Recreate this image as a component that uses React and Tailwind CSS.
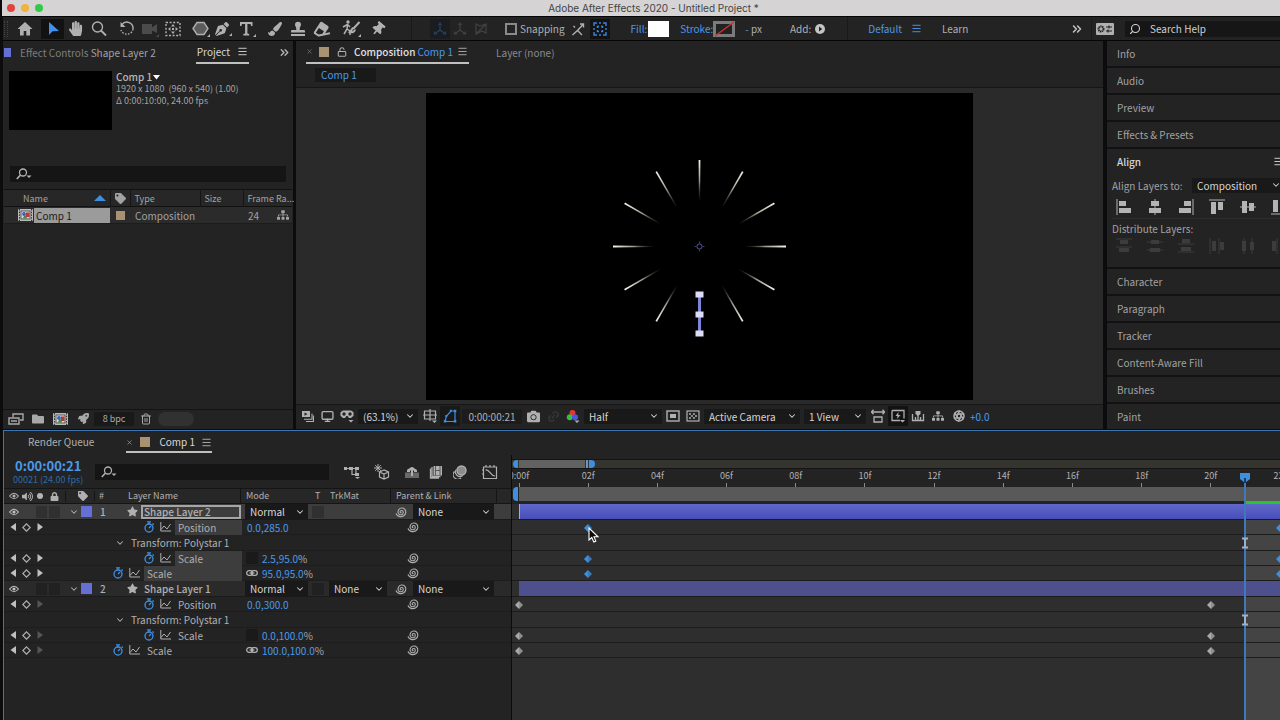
import React from "react";
import {
  FaHandPaper, FaPaintBrush, FaEraser, FaThumbtack, FaPenNib, FaCamera, FaFolder,
  FaTag, FaLock, FaStar, FaSitemap, FaVolumeUp, FaRocket,
} from "react-icons/fa";
import { ChevronDown, Search, ChevronsRight, Menu, X, Trash2, LockOpen, Monitor, Aperture, Link2 } from "lucide-react";

function Svg({ s = 16, w, h, children, className = "" }) {
  const vw = w || s;
  const vh = h || s;
  return (
    <svg width={vw} height={vh} viewBox={`0 0 ${vw} ${vh}`} fill="none" stroke="currentColor" strokeWidth="1.4" className={`shrink-0 ${className}`} aria-hidden="true">
      {children}
    </svg>
  );
}

const HomeIcon = () => (
  <Svg s={16}><path d="M8 1 0.5 8H3v6.500h3.700V10h2.600v4.500H13V8h2.500z" fill="currentColor" stroke="none" /></Svg>
);
const ArrowIcon = () => (
  <Svg s={16}><path d="M4 1v13l3.600-3.700L14 10z" fill="currentColor" stroke="none" /></Svg>
);
const ZoomIcon = () => (
  <Svg s={16}><circle cx="6.500" cy="6" r="5" /><path d="m10 9.500 5 5" strokeWidth="1.800" /></Svg>
);
const RotateIcon = () => (
  <Svg s={16}>
    <path d="M3 3.500A6.200 6.200 0 0 1 14 8" /><path d="M14 8a6.200 6.200 0 0 1-12 1" strokeDasharray="1.500 1.500" />
    <path d="M1.500 1v5h5z" fill="currentColor" stroke="none" />
  </Svg>
);
const VideoIcon = () => (
  <Svg s={18}><path d="M1 4h10v10H1zM10 8l6-4v9l-6-3zM15 17h3v-3z" fill="currentColor" stroke="none" /></Svg>
);
const AnchorIcon = () => (
  <Svg s={16}>
    <rect x="1" y="1.500" width="14" height="13" strokeDasharray="2 1.600" />
    <path d="M8 3 6 5.500h4zM8 13l-2-2.500h4zM3 8l2.500-2v4zM13 8l-2.500-2v4z" fill="currentColor" stroke="none" /><rect x="7" y="7" width="2" height="2" fill="currentColor" stroke="none" />
  </Svg>
);
const HexIcon = () => (
  <Svg s={18}><path d="M5 2.500h7l4 6-4 6H5l-4-6z" fill="#5c5c5c" /><path d="M15 17h3v-3z" fill="currentColor" stroke="none" /></Svg>
);
const PenIcon = () => (
  <span className="flex items-end"><FaPenNib size={14} /><Svg s={3}><path d="M0 3h3V0z" fill="currentColor" stroke="none" /></Svg></span>
);
const TypeIcon = () => (
  <Svg s={18}><path d="M2 2h12.500v4h-1.400l-.6-2H9.400v9.500l1.800.6V15.500H5.300v-1.400l1.800-.6V4H4l-.6 2H2z" fill="currentColor" stroke="none" /><path d="M15 17h3v-3z" fill="currentColor" stroke="none" /></Svg>
);
const StampIcon = () => (
  <Svg s={16}><path d="M8 .8a3 3 0 0 1 3 3c0 1.400-1.300 2.200-1.300 4V9H14a1 1 0 0 1 1 1v1.500H1V10a1 1 0 0 1 1-1h4.300V7.800c0-1.800-1.300-2.600-1.300-4a3 3 0 0 1 3-3zM1 13h14v2H1z" fill="currentColor" stroke="none" /></Svg>
);
const RotoIcon = () => (
  <Svg s={20}>
    <circle cx="7" cy="3" r="1.700" fill="currentColor" stroke="none" />
    <path d="M6.500 5.500 6 10l-3 5M6 10l3 2v4M2 8l4.500-2.500L9 8" strokeWidth="1.500" />
    <path d="m18.500 3-6 6.500M12.500 9c-2 .5-1.800 3-3.500 4 2.500.8 4.800-.5 5-2.500" strokeWidth="2" /><path d="M17 18h3v-3z" fill="currentColor" stroke="none" />
  </Svg>
);
const AxisIcon = ({ kind }) => (
  <Svg s={14}>
    {kind === "view" ? <path d="M1 2l4 2 6-2v9l-4-2-6 3zM1 12 11 2" strokeWidth="1.200" /> : <path d="M7 1v7M7 8l-5.500 4M7 8l5.500 4M5.500 3 7 1l1.500 2M1.500 9.500V12H4M12.500 9.500V12H10" strokeWidth="1.200" />}
  </Svg>
);
const SnapArrow = () => (
  <Svg s={14}><path d="m1.500 13 5-4.500L11 13M6.500 8.500 12 2.500M9 2h3.500v3.500M2.500 4l1.500 1.500" strokeWidth="1.400" /></Svg>
);
const SnapBox = () => (
  <Svg s={14}><path d="M1 4V1h3M10 1h3v3M13 10v3h-3M4 13H1v-3M6 4.500H4.500V6M8 4.500h1.500V6M6 9.500H4.500V8M8 9.500h1.500V8M6 1h2M6 13h2M1 6v2M13 6v2" strokeWidth="1.400" /></Svg>
);
const SettingsIcon = () => (
  <Svg w={18} h={12}>
    <rect x="0" y="0" width="18" height="12" rx="1" fill="currentColor" stroke="none" />
    <circle cx="5" cy="6" r="2.500" stroke="#222" strokeDasharray="1.300 .5" strokeWidth="2" />
    <path d="M10 4h6M10 8h6M13 2.500v3M12 6.500v3" stroke="#222" strokeWidth="1.200" />
  </Svg>
);
const FilterSearch = () => (
  <Svg w={16} h={12}><circle cx="7" cy="4.500" r="3.500" strokeWidth="1.300" /><path d="M4.500 7 .8 11" strokeWidth="1.600" /><path d="M10.500 7.500h5L13 10z" fill="currentColor" stroke="none" /></Svg>
);
const Triangle = ({ dir, dim }) => (
  <Svg s={8} className={dim ? "text-[#555]" : "text-[#c0c0c0]"}>
    <path d={dir === "left" ? "M7 0v8L1.500 4z" : "M1.500 0v8L7 4z"} fill="currentColor" stroke="none" />
  </Svg>
);
const EyeIcon = () => (
  <Svg w={10} h={8}><path d="M.6 4Q5-1.500 9.400 4 5 9.500.6 4z" strokeWidth="1.100" /><circle cx="5" cy="4" r="1.600" fill="currentColor" stroke="none" /></Svg>
);
const Stopwatch = () => (
  <Svg s={12} className="text-[#3f8fe0]"><circle cx="6" cy="7" r="4" strokeWidth="1.300" /><path d="M4 .9h4M6 1v2M6 7l2-2M9.500 2.500l1.200 1.200" strokeWidth="1.300" /></Svg>
);
const GraphIcon = () => (
  <Svg w={11} h={10}><path d="M.8 0v9H11M1 7.500l3-3.500 3 3L10.500 2" strokeWidth="1" /></Svg>
);
const ChainIcon = () => (
  <Svg w={12} h={8}><rect x=".7" y="1.700" width="6" height="4.600" rx="2.300" strokeWidth="1.300" /><rect x="5.300" y="1.700" width="6" height="4.600" rx="2.300" strokeWidth="1.300" /><path d="M3.500 4h5" strokeWidth="1.200" /></Svg>
);
const Pickwhip = () => (
  <Svg s={12}><path d="M6.500 6.500C5.800 7.200 4.800 6.300 5.300 5.300 6 4 8.300 4.300 8.300 6.400 8.200 9 4.600 9.600 3.400 7.400 2.200 4.700 4.200 2 6.800 2 9.500 2 11 4 10.800 6.400 10.500 9.500 7.500 11 5 10.600 2.800 10.200 1.400 9 1 7.400" strokeWidth="1.100" /></Svg>
);
const FlowIcon = () => (
  <Svg w={16} h={14}><path d="M2 3.500h6M8 3.500h4v6M5 3.500h3v6h4" strokeWidth="1.200" /><path d="M0 2h3v3H0zM5 2h4v3H5zM11 2h4v3h-4zM11 8h4v3h-4zM11 12h5l-2.500 2z" fill="currentColor" stroke="none" /></Svg>
);
const DraftIcon = () => (
  <Svg s={16}><path d="M10 6 5.500 8v5L10 15l4.500-2V8zM5.500 8 10 10l4.500-2M10 10v5" strokeWidth="1.200" /><path d="M4 0v8M0 4h8M1.200 1.200l5.600 5.600M6.800 1.200 1.200 6.800" strokeWidth="1" /></Svg>
);
const ShyIcon = () => (
  <Svg w={16} h={14}><path d="M1 7.500h14V13H1z" fill="#686868" stroke="none" /><path d="M3 7V5.500C3 4 5 4 6 3c1-1.200 3-1.200 4 0s3 1 3 2.500V7h-3V5.500H9V11H7V5.500H6V7z" fill="currentColor" stroke="none" /></Svg>
);
const BlendIcon = () => (
  <Svg s={14}><rect x="4.500" y="1" width="8.500" height="9.500" fill="currentColor" stroke="none" /><path d="M1.500 3.500V13H10M3 2v9.500h8.500" strokeWidth="1.300" /><path d="M6.500 1v9.500M11 1v9.500M6.500 5.500h4.500" stroke="#444" strokeWidth=".8" /></Svg>
);
const BlurIcon = () => (
  <Svg s={14}><circle cx="8.500" cy="5.500" r="4.500" fill="#8c8c8c" /><path d="M3.300 4.500a4.500 4.500 0 0 0 6.300 6.200M1.500 6.500A4.500 4.500 0 0 0 8 12.800" strokeWidth="1.200" /></Svg>
);
const GraphEditor = () => (
  <Svg s={16}><path d="M1.500 3h13v11.500h-13zM4 3V1M8 3V1M12 3V1M0 6h1.500M0 10h1.500M3.500 6C8 5 8 12 13 12" strokeWidth="1.200" /></Svg>
);
const CompIcon = () => (
  <Svg w={15} h={12}>
    <rect width="15" height="12" rx="1" fill="#b9b9b9" stroke="none" /><path d="M1.500 0v12M13.500 0v12" stroke="#333" strokeDasharray="1.500 1.200" strokeWidth="1" /><rect x="3" y="2" width="9" height="8" fill="#d5d5d5" stroke="#444" strokeWidth=".8" />
    <circle cx="6" cy="5" r="1.900" fill="#3563b8" stroke="none" /><path d="M8 3.500h3.500V8H8z" fill="#b53b36" stroke="none" /><path d="m7 5.500 2.300 4H4.700z" fill="#3c8a48" stroke="none" />
  </Svg>
);
const RgbIcon = () => (
  <Svg s={14}><g stroke="none"><circle cx="6.500" cy="4" r="3" fill="#f0322d" /><circle cx="3.800" cy="8.300" r="3" fill="#2fc43b" /><circle cx="9" cy="8.300" r="3" fill="#4b56e8" /><path d="M8.500 11.500h5L11 14z" fill="currentColor" /></g></Svg>
);
const InterpretIcon = () => (
  <Svg w={16} h={12}><path d="M5 4V1h10v6h-3M1 5h10v6H1zM3 8h6" strokeWidth="1.400" /></Svg>
);
const LayersIcon = () => (
  <Svg s={13}><path d="M1 1h8v6H1z" fill="currentColor" stroke="none" /><path d="M3 9.300h8V3.500M5 11.500h7.500V5.500" strokeWidth="1.100" /><path d="m3.500 2.500 3 1.600-3 1.600z" fill="#222" stroke="none" /></Svg>
);
const GoggleIcon = () => (
  <Svg s={14}><path d="M3 1.500h8l2.500 1.800v3.500L11 9H9L7.600 7H6.400L5 9H3L.5 6.800V3.300z" fill="currentColor" stroke="none" /><circle cx="4" cy="5" r="1.700" fill="#222" stroke="none" /><circle cx="10" cy="5" r="1.700" fill="#222" stroke="none" /><path d="M8.500 11h5L11 13.500z" fill="currentColor" stroke="none" /></Svg>
);
const GridIcon = () => (
  <Svg s={14}><path d="M1.500 2h11v8h-11zM7 0v12M0 6h14" strokeWidth="1.200" /><path d="M9 11.500h5L11.500 14z" fill="currentColor" stroke="none" /></Svg>
);
const MaskIcon = () => (
  <Svg s={14}><path d="M2 12.500 3.500 7 8 2h4v10.500z" strokeWidth="1.200" /><path d="M.8 11h2.500v2.500H.8zM10.800 11h2.500v2.500h-2.500zM10.800.8h2.500v2.500h-2.500zM6.800.8h2v2h-2zM2.300 6h2v2h-2z" fill="currentColor" stroke="none" /></Svg>
);
const RoiIcon = () => (
  <Svg w={14} h={12}><rect x="1" y="1" width="12" height="10" /><rect x="4" y="4" width="6" height="4" fill="currentColor" stroke="none" /></Svg>
);
const CheckerIcon = () => (
  <Svg w={14} h={12}><rect x="1" y="1" width="12" height="10" strokeWidth="1.200" /><path d="M3 3h2v2H3zM7 3h2v2H7zM5 5h2v2H5zM9 5h2v2H9zM3 7h2v2H3zM7 7h2v2H7z" fill="#8a8a8a" stroke="none" /></Svg>
);
const PixelIcon = () => (
  <Svg s={14}><path d="M0 3h14M2.500.8.500 3l2 2.200M11.500.8l2 2.200-2 2.200M3 8h8v5H3z" strokeWidth="1.300" /></Svg>
);
const FastIcon = () => (
  <Svg s={14}><path d="M1 1.500h12v8M1 1.500v10h8" strokeWidth="1.300" /><path d="M7.500 3 4.500 7h2L6 10l3.500-4H7.300zM9 11h5l-2.500 2.500z" fill="currentColor" stroke="none" /></Svg>
);
const TimelineIcon = () => (
  <Svg w={14} h={12}><path d="M1.500 4v6.500h11V4M4.500 7v3M9.500 7v3M7 4v6" strokeWidth="1.300" /><path d="M4.500 1h5v3l-2.500 2-2.500-2z" fill="currentColor" stroke="none" /></Svg>
);

const alignRects = {
  left: ["M1 0v16", "M3 2h7v5H3zM3 9h12v5H3z"],
  hcenter: ["M8 0v16", "M4 2h8v5H4zM2 9h12v5H2z"],
  right: ["M15 0v16", "M6 2h7v5H6zM1 9h12v5H1z"],
  top: ["M0 1h16", "M2 3h5v12H2zM9 3h5v8H9z"],
  vcenter: ["M0 8h16", "M2 2h5v12H2zM9 4h5v8H9z"],
  bottom: ["M0 15h16", "M2 1h5v12H2zM9 5h5v8H9z"],
  dtop: ["M0 1h16M0 9h16", "M4 2h8v4H4zM3 10h10v4H3z"],
  dvcenter: ["M0 4h16M0 12h16", "M4 2h8v4H4zM3 10h10v4H3z"],
  dbottom: ["M0 6h16M0 14h16", "M4 1h8v4H4zM3 9h10v4H3z"],
  dleft: ["M1 0v16M10 0v16", "M3 3h4v10H3zM11 4h4v8h-4z"],
  dhcenter: ["M4 0v16M12 0v16", "M2 3h4v10H2zM10 4h4v8h-4z"],
  dright: ["M6 0v16M15 0v16", "M1 3h4v10H1zM10 4h4v8h-4z"],
};
function AlignButton({ kind, dim }) {
  const [line, blocks] = alignRects[kind];
  return (
    <button aria-label={kind} className={`flex w-[31px] shrink-0 items-center justify-center ${dim ? "text-[#3c3c3d]" : "text-[#b4b4b4]"}`}>
      <Svg s={16}><path d={line} strokeWidth="1" /><path d={blocks} fill="currentColor" stroke="none" /></Svg>
    </button>
  );
}

function Tool({ label, children, className = "w-[23px]" }) {
  return (
    <button aria-label={label} className={`flex h-5 shrink-0 items-center justify-center ${className}`}>{children}</button>
  );
}

function Select({ label, value, className = "" }) {
  return (
    <div className={`grid h-[15px] shrink-0 items-center bg-[#19191a] text-[#d6d6d6] ${className}`}>
      <select aria-label={label} defaultValue={value} className="h-[15px] w-full appearance-none bg-transparent pl-[5px] text-[10px] leading-[15px] [grid-area:1/1]">
        <option>{value}</option>
      </select>
      <ChevronDown size={10} strokeWidth={2.500} className="pointer-events-none mr-[3px] justify-self-end [grid-area:1/1]" />
    </div>
  );
}

function Toolbar() {
  return (
    <header className="flex h-[25px] items-center overflow-hidden border-y border-[#060606] bg-[#232324] pl-px text-[10px] text-[#b0b0b0]">
      <div className="mr-px h-4 w-1 shrink-0 border-x border-dotted border-[#454545]" />
      <Tool label="Home" className="w-8"><HomeIcon /></Tool>
      <div className="flex shrink-0 gap-[5px]">
        <div className="flex">
          <Tool label="Selection" className="w-[23px] bg-[#121213] text-[#3f90ee]"><ArrowIcon /></Tool>
          <Tool label="Hand"><FaHandPaper size={15} /></Tool>
          <Tool label="Zoom"><ZoomIcon /></Tool>
        </div>
        <div className="flex">
          <Tool label="Rotation"><RotateIcon /></Tool>
          <Tool label="Camera" className="w-[23px] text-[#4b4b4b]"><VideoIcon /></Tool>
          <Tool label="Pan Behind"><AnchorIcon /></Tool>
        </div>
        <div className="flex">
          <Tool label="Polygon"><HexIcon /></Tool>
          <Tool label="Pen"><PenIcon /></Tool>
          <Tool label="Type"><TypeIcon /></Tool>
        </div>
        <div className="flex">
          <Tool label="Brush"><FaPaintBrush size={14} /></Tool>
          <Tool label="Clone Stamp"><StampIcon /></Tool>
          <Tool label="Eraser"><FaEraser size={16} className="-rotate-12" /></Tool>
        </div>
        <div className="flex">
          <Tool label="Roto Brush" className="w-[27px]"><RotoIcon /></Tool>
          <Tool label="Puppet Pin" className="w-[27px]"><FaThumbtack size={14} className="rotate-[40deg]" /></Tool>
        </div>
      </div>
      <div className="ml-5 flex h-full shrink-0 items-center border-l border-[#1a1a1a] pl-[18px]">
        <Tool label="Local axis" className="w-5 bg-[#1b1c1f] text-[#26405f]"><AxisIcon /></Tool>
        <Tool label="World axis" className="w-5 text-[#424242]"><AxisIcon /></Tool>
        <Tool label="View axis" className="w-[23px] text-[#424242]"><AxisIcon kind="view" /></Tool>
      </div>
      <label className="ml-3 flex shrink-0 items-center gap-[3px]">
        <input type="checkbox" className="size-3 appearance-none border-2 border-[#8a8a8a]" />
        Snapping
      </label>
      <Tool label="Snap edges" className="ml-px w-6"><SnapArrow /></Tool>
      <Tool label="Snap bounds" className="w-5 bg-[#131314] text-[#3b86da]"><SnapBox /></Tool>
      <button className="ml-[21px] flex shrink-0 items-center gap-px text-[#4a9aea]">Fill:<span className="h-4 w-[21px] bg-white" /></button>
      <button className="ml-[11px] flex shrink-0 items-center text-[#4a9aea]">
        Stroke:
        <Svg w={22} h={16}><rect x="1.500" y="1.500" width="19" height="13" fill="#222" stroke="#7b7b7b" strokeWidth="3" /><path d="M2 15 21 1" stroke="#d5312e" strokeWidth="1.300" /></Svg>
      </button>
      <span className="ml-[10px] shrink-0"><span className="text-[#4a9aea]">-</span> px</span>
      <button className="ml-7 flex shrink-0 items-center gap-1">Add:
        <Svg s={10}><circle cx="5" cy="5" r="5" fill="#c4c4c4" stroke="none" /><path d="M4 2.500 7.200 5 4 7.500z" fill="#222" stroke="none" /></Svg>
      </button>
      <nav className="ml-[22px] flex h-full flex-1 items-center border-l border-[#1a1a1a] pl-5">
        <button className="flex items-center gap-[9px] text-[#4a9aea]">Default <Menu size={11} /></button>
        <button className="ml-5">Learn</button>
        <button aria-label="More workspaces" className="mr-[7px] ml-auto text-[#c8c8c8]"><ChevronsRight size={14} strokeWidth={2.500} /></button>
      </nav>
      <Tool label="Sync settings" className="w-[26px] border-l border-[#1a1a1a]"><SettingsIcon /></Tool>
      <label className="ml-2 flex h-4 w-[155px] shrink-0 items-center gap-[9px] bg-[#161617] pl-1 text-[#d0d0d0]">
        <Search size={12} strokeWidth={2.200} className="-scale-x-100" />
        <input aria-label="Search Help" placeholder="Search Help" className="min-w-0 flex-1 bg-transparent outline-none placeholder:text-[#d0d0d0]" />
      </label>
    </header>
  );
}

function ProjectPanel() {
  return (
    <section className="flex w-[290px] shrink-0 flex-col bg-[#232324] pb-[2px] text-[#a2a2a2]">
      <div className="flex h-[23px] items-stretch text-[10px] leading-6">
        <span className="mt-[7px] ml-px h-[9px] w-[7px] bg-[#6470d6]" />
        <button className="ml-[9px]"><span className="text-[#7e7e7e]">Effect Controls</span> Shape Layer 2</button>
        <button className="ml-auto flex items-center gap-[7px] border-b-2 border-[#c0c0c0] px-px text-[#d6d6d6]">Project <Menu size={11} /></button>
        <button aria-label="More panels" className="mr-[2px] ml-[29px] text-[#b5b5b5]"><ChevronsRight size={13} strokeWidth={2.500} /></button>
      </div>
      <div className="flex gap-1 pt-[7px] pl-[6px]">
        <div className="h-[59px] w-[103px] bg-black" />
        <div className="text-[9px] leading-3">
          <div className="flex items-center text-[10px] leading-3 font-medium text-[#b5b5b5]">Comp 1<Svg s={8}><path d="M1 2h7L4.500 6.500z" fill="#fff" stroke="none" /></Svg></div>
          <div className="whitespace-pre">1920 x 1080  (960 x 540) (1.00)</div>
          <div>Δ 0:00:10:00, 24.00 fps</div>
        </div>
      </div>
      <label className="mx-[7px] mt-9 flex h-4 items-center bg-[#151516] pl-[6px] text-[#b5b5b5]">
        <FilterSearch />
        <input aria-label="Search project" className="min-w-0 flex-1 bg-transparent outline-none" />
      </label>
      <div className="mt-[7px] px-px">
        <table className="w-full table-fixed border-collapse text-left text-[9px]">
          <colgroup><col className="w-[106px]" /><col className="w-[20px]" /><col className="w-[70px]" /><col className="w-[43px]" /><col /></colgroup>
          <thead>
            <tr className="h-[17px] border-y border-[#111] bg-[#272728] leading-[15px]">
              <th className="border-r border-[#151515] py-0 pl-[19px] font-normal"><span className="flex items-center justify-between pr-1">Name<Svg w={12} h={6}><path d="M0 6 6 0l6 6z" fill="#3f8fe0" stroke="none" /></Svg></span></th>
              <th aria-label="Label" className="border-r border-[#151515] p-0"><FaTag size={11} className="mx-auto" /></th>
              <th className="border-r border-[#151515] py-0 pl-1 font-normal">Type</th>
              <th className="border-r border-[#151515] py-0 pl-1 font-normal">Size</th>
              <th className="py-0 pl-1 font-normal whitespace-nowrap">Frame Ra...</th>
            </tr>
          </thead>
          <tbody>
            <tr className="h-[17px] border-b border-[#1c1c1c] bg-[#2b2b2c] text-[10px] leading-[15px]">
              <td className="p-0"><span className="flex items-center pl-[14px]"><CompIcon /><span className="ml-px flex-1 bg-[#9b9b9b] pl-[2px] text-[#1a1a1a]">Comp 1</span></span></td>
              <td className="p-0"><span className="mx-auto block size-[9px] bg-[#a89272]" /></td>
              <td className="py-0 pl-[5px]">Composition</td>
              <td className="p-0" />
              <td className="py-0 pr-[3px] pl-[5px]"><span className="flex items-center justify-between">24 <FaSitemap size={12} /></span></td>
            </tr>
          </tbody>
        </table>
      </div>
      <div className="mt-auto flex h-[18px] items-center border-t border-[#141414] pl-px text-[#a9a9a9]">
        <Tool label="Interpret footage"><InterpretIcon /></Tool>
        <Tool label="New folder" className="w-[22px]"><FaFolder size={12} /></Tool>
        <Tool label="New composition"><CompIcon /></Tool>
        <Tool label="Project settings" className="w-[22px]"><FaRocket size={11} /></Tool>
        <button className="h-[14px] w-10 bg-[#19191a] text-[9px] leading-[14px]">8 bpc</button>
        <Tool label="Delete"><Trash2 size={12} /></Tool>
        <div className="ml-px h-[14px] w-9 rounded-full bg-[#313132]" />
      </div>
    </section>
  );
}

const rayAngles = [0, 30, 60, 90, 120, 150, 210, 240, 270, 300, 330];

function Artwork() {
  return (
    <svg viewBox="0 0 547 307" className="h-full w-full" role="img" aria-label="Starburst composition">
      <defs>
        <linearGradient id="ray" gradientUnits="userSpaceOnUse" x1="0" y1="-86" x2="0" y2="-46">
          <stop offset="0" stopColor="#f4f1e6" /><stop offset=".5" stopColor="#9f9b90" /><stop offset="1" stopColor="#4a4640" stopOpacity=".1" />
        </linearGradient>
      </defs>
      <rect width="547" height="307" fill="#000" />
      <g transform="translate(273.500 153.500)">
        {rayAngles.map((a) => (
          <path key={a} d="M-.9-86.500H.9L.6-46H-.6z" fill="url(#ray)" transform={`rotate(${a})`} />
        ))}
        <circle r="2.600" fill="none" stroke="#5a5a9c" /><path d="M0-5v2M0 5V3M-5 0h2M5 0H3" stroke="#3e3e70" />
        <path d="M0 48v39" stroke="#7c86d8" strokeWidth="3" />
        <path d="M-4 45h8v6h-8zM-4 65h8v6h-8zM-4 84h8v6h-8z" fill="#dcdcf6" />
      </g>
    </svg>
  );
}

function CompositionPanel() {
  return (
    <section className="flex min-w-0 flex-1 flex-col bg-[#232324] pb-[2px] text-[10px] text-[#b0b0b0]">
      <div className="flex h-[23px] items-stretch leading-6">
        <div className="ml-[10px] flex items-center border-b-2 border-[#c0c0c0] pr-px">
          <button aria-label="Close tab" className="text-[#8a8a8a]"><X size={7} /></button>
          <span className="ml-[6px] size-[10px] bg-[#a89272]" />
          <LockOpen size={10} strokeWidth={2.500} className="ml-2" />
          <span className="ml-[7px] font-medium text-[#e0e0e0]">Composition</span>
          <span className="ml-[2px] text-[#4a9aea]">Comp 1</span>
          <Menu size={11} className="ml-1" />
        </div>
        <button className="ml-[27px] text-[#8a8a8a]">Layer (none)</button>
      </div>
      <div className="flex h-6 items-start border-b border-[#161616] pt-1 pl-[19px]">
        <button className="h-[14px] w-[61px] bg-[#19191a] pl-[6px] text-left leading-[14px] text-[#4a9aea]">Comp 1</button>
      </div>
      <div className="min-h-0 flex-1 bg-[#2a2a2b] pt-[5px] pb-1 contain-size"><Artwork /></div>
      <div className="flex h-[23px] items-center border-t border-[#161616] pl-px">
        <Tool label="Always preview" className="w-5"><LayersIcon /></Tool>
        <Tool label="Primary viewer" className="w-5"><Monitor size={13} strokeWidth={2.500} /></Tool>
        <Tool label="Mercury transmit" className="w-5"><GoggleIcon /></Tool>
        <Select label="Magnification" value="(63.1%)" className="ml-px w-[60px]" />
        <Tool label="Grid and guides" className="ml-[2px] w-5"><GridIcon /></Tool>
        <Tool label="Toggle mask" className="w-5 bg-[#19191a] text-[#3f8fe0]"><MaskIcon /></Tool>
        <button className="ml-[2px] h-[15px] w-[60px] shrink-0 bg-[#1c1c1d] leading-[15px]">0:00:00:21</button>
        <Tool label="Take snapshot" className="ml-px w-5"><FaCamera size={13} /></Tool>
        <Tool label="Show snapshot" className="w-5 text-[#3c3c3d]"><Link2 size={13} className="-rotate-45" /></Tool>
        <Tool label="Show channel" className="w-5"><RgbIcon /></Tool>
        <Select label="Resolution" value="Half" className="ml-px w-[78px]" />
        <Tool label="Region of interest" className="ml-px w-5"><RoiIcon /></Tool>
        <Tool label="Transparency grid" className="w-5"><CheckerIcon /></Tool>
        <Select label="3D view" value="Active Camera" className="ml-px w-24" />
        <Select label="View layout" value="1 View" className="ml-1 w-[62px]" />
        <Tool label="Pixel aspect ratio" className="ml-[2px] w-5"><PixelIcon /></Tool>
        <Tool label="Fast previews" className="w-5 bg-[#131314]"><FastIcon /></Tool>
        <Tool label="Timeline" className="w-5"><TimelineIcon /></Tool>
        <Tool label="Flowchart" className="w-5"><FaSitemap size={12} /></Tool>
        <Tool label="Reset exposure" className="ml-px w-5"><Aperture size={12} strokeWidth={3} /></Tool>
        <button className="ml-px text-[#4a9aea]">+0.0</button>
      </div>
    </section>
  );
}

function SideRow({ name, last }) {
  return (
    <button className={`block w-full shrink-0 pl-[10px] text-left leading-6 ${last ? "h-[25px]" : "h-[27px] border-b-2 border-[#121213]"}`}>{name}</button>
  );
}

function SidePanel() {
  return (
    <aside className="w-[173px] shrink-0 overflow-hidden bg-[#232324] text-[10px] text-[#a2a2a2]">
      {["Info", "Audio", "Preview", "Effects & Presets"].map((n) => <SideRow key={n} name={n} />)}
      <div className="h-[120px] border-b-2 border-[#121213]">
        <div className="flex h-[25px] items-center justify-between pl-[10px] leading-6 font-medium text-[#d8d8d8]">Align <Menu size={11} className="-mr-1" /></div>
        <div className="flex h-[22px] items-center pl-[5px]">
          <span className="w-20 shrink-0">Align Layers to:</span>
          <Select label="Align layers to" value="Composition" className="w-[92px]" />
        </div>
        <div className="ml-px flex h-[22px]">
          {["left", "hcenter", "right", "top", "vcenter", "bottom"].map((k) => <AlignButton key={k} kind={k} />)}
        </div>
        <div className="ml-[5px] border-t border-[#2c2c2d] leading-[19px]">Distribute Layers:</div>
        <div className="ml-px flex h-4">
          {["dtop", "dvcenter", "dbottom", "dleft", "dhcenter", "dright"].map((k) => <AlignButton key={k} kind={k} dim />)}
        </div>
      </div>
      {["Character", "Paragraph", "Tracker", "Content-Aware Fill", "Brushes"].map((n) => <SideRow key={n} name={n} />)}
      <SideRow name="Paint" last />
    </aside>
  );
}

const rows = [
  { kind: "layer", n: 1, name: "Shape Layer 2", selected: true },
  { kind: "prop", name: "Position", value: "0.0,285.0", keys: [2, 22], selected: true },
  { kind: "group", name: "Transform: Polystar 1" },
  { kind: "prop", name: "Scale", value: "2.5,95.0", unit: "%", box: true, keys: [2, 22], selected: true },
  { kind: "prop", name: "Scale", value: "95.0,95.0", unit: "%", link: true, outer: true, keys: [2, 22], selected: true },
  { kind: "layer", n: 2, name: "Shape Layer 1" },
  { kind: "prop", name: "Position", value: "0.0,300.0", keys: [0, 20] },
  { kind: "group", name: "Transform: Polystar 1" },
  { kind: "prop", name: "Scale", value: "0.0,100.0", unit: "%", box: true, keys: [0, 20] },
  { kind: "prop", name: "Scale", value: "100.0,100.0", unit: "%", link: true, outer: true, keys: [0, 20] },
];

function LayerRow({ r }) {
  return (
    <div className={`flex h-4 items-center border-b border-[#1a1a1b] ${r.selected ? "bg-[#3d3d3e]" : "bg-[#2a2a2b]"}`}>
      <div className="flex w-[66px] shrink-0 items-center pl-[5px] text-[#c0c0c0]">
        <button aria-label="Toggle visibility"><EyeIcon /></button>
        <button aria-label="Solo" className="ml-[17px] h-3 w-[11px] bg-black/20" />
        <button aria-label="Lock" className="ml-[2px] h-3 w-[11px] bg-black/20" />
      </div>
      <div className="flex w-[171px] shrink-0 items-center">
        <button aria-label="Collapse layer" className="-ml-px"><ChevronDown size={10} strokeWidth={2.500} /></button>
        <span className="ml-[2px] size-[11px] bg-[#6470d6]" />
        <span className="ml-2 w-[10px] font-medium">{r.n}</span>
        <FaStar size={11} className="mr-[3px] ml-[17px] shrink-0" />
        <button className={`h-[14px] flex-1 border-2 pl-px text-left leading-[10px] font-medium ${r.selected ? "border-[#a5a5a5]" : "border-transparent"}`}>{r.name}</button>
      </div>
      <div className="flex w-[86px] shrink-0 items-center pl-1">
        <Select label="Blend mode" value="Normal" className="w-[63px]" />
        <button aria-label="Preserve transparency" className="ml-1 size-3 bg-black/20" />
      </div>
      <div className="w-16 shrink-0 pl-[2px]">{!r.selected && <Select label="Track matte" value="None" className="w-[58px]" />}</div>
      <div className="flex items-center gap-[6px] pl-1">
        <Pickwhip />
        <Select label="Parent" value="None" className="w-[81px]" />
      </div>
    </div>
  );
}

function PropRow({ r }) {
  return (
    <div className="flex h-[15px] items-center border-b border-[#1d1d1e]">
      <div className={`flex shrink-0 items-center pl-[5px] ${r.outer ? "w-[108px]" : "w-[139px]"}`}>
        <button aria-label="Previous keyframe"><Triangle dir="left" /></button>
        <button aria-label="Toggle keyframe" className="mx-[5px]"><Svg s={9}><path d="M4.500.800 8.200 4.500 4.500 8.200.800 4.500z" strokeWidth="1.200" /></Svg></button>
        <button aria-label="Next keyframe"><Triangle dim={!r.selected} /></button>
      </div>
      <Stopwatch />
      <span className="ml-[5px] shrink-0"><GraphIcon /></span>
      <span className={`ml-1 h-[15px] flex-1 pl-[3px] leading-[15px] ${r.selected ? "bg-[#3d3d3e]" : ""}`}>{r.name}</span>
      <div className="flex w-[161px] shrink-0 items-center pl-1">
        {r.box && <span className="mr-1 size-3 bg-[#1a1a1b]" />}
        {r.link && <span className="mr-1"><ChainIcon /></span>}
        <button className={`${r.box || r.link ? "" : "pl-px"} text-[#4a9aea]`}>{r.value}<span className="text-[#a9a9a9]">{r.unit}</span></button>
      </div>
      <div className="w-[108px] shrink-0 pl-1"><Pickwhip /></div>
    </div>
  );
}

function GroupRow({ r }) {
  return (
    <div className="flex h-4 items-center border-b border-[#1d1d1e] pl-[111px]">
      <ChevronDown size={10} strokeWidth={2.500} /><span className="ml-[6px]">{r.name}</span>
    </div>
  );
}

const at = (frame) => ({ left: `${(frame / 22) * 100}%` });

function TrackRow({ r }) {
  if (r.kind === "layer") {
    return (
      <div className="flex h-4 border-b border-[#1a1a1b] pl-[7px]">
        <div className={`-mr-px flex-1 border-l ${r.selected ? "border-[#a9a9c9] bg-linear-to-b from-[#6168cb] to-[#474db7]" : "border-[#4e508e] bg-[#4e508e]"}`} />
      </div>
    );
  }
  return (
    <div className={`border-b border-[#1c1c1d] pl-[7px] ${r.kind === "group" ? "h-4" : "h-[15px]"}`}>
      <div className="relative h-full">
        {(r.keys || []).map((k) => (
          <button key={k} aria-label={`Keyframe ${k}`} style={at(k)} className={`absolute top-1 -ml-1 ${r.selected ? "text-[#3f8fe0]" : "text-[#a9a9a9]"}`}>
            <Svg s={8}><path d="M4 0 8 4 4 8 0 4z" fill="currentColor" stroke="none" /><path d="M4 0v8l4-4z" fill="#000" fillOpacity=".15" stroke="none" /></Svg>
          </button>
        ))}
        {r.kind === "group" && (
          <Svg w={8} h={12} className="absolute top-[2px] left-[95.4545%] z-10 -ml-1 text-[#9fb2cc]"><path d="M1 1.500h6M1 10.500h6M4 1v10" strokeWidth="2" /></Svg>
        )}
      </div>
    </div>
  );
}

function Timeline() {
  const ticks = [0, 2, 4, 6, 8, 10, 12, 14, 16, 18, 20, 22];
  return (
    <section className="mt-px flex flex-1 flex-col border-t border-l border-[#3f76b0] bg-[#232324] text-[10px] text-[#b0b0b0]">
      <div className="flex h-6 items-stretch pb-[2px] leading-[22px]">
        <button className="ml-6">Render Queue</button>
        <div className="ml-8 flex items-center border-b-2 border-[#c0c0c0] pt-[2px]">
          <button aria-label="Close timeline tab"><X size={7} /></button>
          <span className="ml-[7px] size-[10px] bg-[#a89272]" />
          <span className="ml-[9px] text-[#d8d8d8]">Comp 1</span>
          <Menu size={11} className="ml-[6px]" />
        </div>
      </div>
      <div className="flex flex-1">
        <div className="w-[507px] shrink-0">
          <div className="flex h-[33px] items-center">
            <div className="w-[91px] shrink-0 text-[#4a9aea]">
              <div className="pl-[11px] text-[13px] leading-4 font-bold">0:00:00:21</div>
              <div className="pl-[9px] text-[9px] leading-3 text-[#2f6aa6]">00021 (24.00 fps)</div>
            </div>
            <label className="flex h-4 w-[234px] shrink-0 items-center bg-[#151516] pl-[6px]">
              <FilterSearch />
              <input aria-label="Search layers" className="min-w-0 flex-1 bg-transparent outline-none" />
            </label>
            <Tool label="Mini flowchart" className="ml-2 w-[30px]"><FlowIcon /></Tool>
            <Tool label="Draft 3D" className="w-[30px]"><DraftIcon /></Tool>
            <Tool label="Hide shy layers" className="w-[30px]"><ShyIcon /></Tool>
            <Tool label="Frame blending" className="w-[18px]"><BlendIcon /></Tool>
            <Tool label="Motion blur" className="w-[30px]"><BlurIcon /></Tool>
            <Tool label="Graph editor" className="w-[30px]"><GraphEditor /></Tool>
          </div>
          <div className="flex h-4 items-center border-y border-[#151515] bg-[#272728] text-[9px] leading-[14px]">
            <div className="flex w-[62px] shrink-0 items-center border-r border-[#151515] pl-[5px]">
              <EyeIcon /><FaVolumeUp size={11} className="ml-[3px]" /><span className="ml-1 size-[6px] rounded-full bg-[#b5b5b5]" /><FaLock size={9} className="ml-[7px]" />
            </div>
            <div className="flex w-[29px] shrink-0 justify-end border-r border-[#151515] pr-[6px]"><FaTag size={10} /></div>
            <span className="w-[33px] shrink-0 pl-1">#</span>
            <span className="w-[113px] shrink-0 border-r border-[#151515]">Layer Name</span>
            <span className="w-[74px] shrink-0 pl-[5px]">Mode</span>
            <span className="w-[15px] shrink-0">T</span>
            <span className="w-[61px] shrink-0 border-r border-[#151515]">TrkMat</span>
            <span className="w-[106px] shrink-0 border-r border-[#151515] pl-[5px]">Parent &amp; Link</span>
          </div>
          {rows.map((r, i) =>
            r.kind === "layer" ? <LayerRow key={i} r={r} /> : r.kind === "group" ? <GroupRow key={i} r={r} /> : <PropRow key={i} r={r} />
          )}
        </div>
        <div className="relative flex min-w-0 flex-1 flex-col overflow-hidden border-l border-[#0c0c0c]">
          <div className="mt-1 flex h-[10px] items-stretch gap-px border-y border-[#141414] bg-[#35342e]">
            <span className="ml-px w-[5px] rounded-l-full bg-[#3f8fe0]" />
            <span className="w-[66px] bg-[#626262]" />
            <span className="w-[2px] bg-[#6f93bd]" />
            <span className="w-[6px] rounded-r-full bg-[#3f8fe0]" />
          </div>
          <div className="h-[18px] pl-[7px]">
            <div className="relative h-full text-[9px] leading-[14px]">
              {ticks.map((t) => (
                <div key={t} style={at(t)} className="absolute flex w-10 -translate-x-1/2 flex-col items-center">
                  {t === 0 ? "0:00f" : `${String(t).padStart(2, "0")}f`}
                  <span className="h-1 w-px bg-[#8a8a8a]" />
                </div>
              ))}
            </div>
          </div>
          <div className="flex h-[14px] bg-[#232324]">
            <span className="mx-px w-[5px] rounded-l-sm bg-[#3f8fe0]" /><span className="flex-1 bg-[#595959]" />
          </div>
          <div className="h-[3px] pl-[7px]"><div style={{ marginLeft: `${(21 / 22) * 100}%` }} className="h-[3px] bg-[#27c52f]" /></div>
          <div className="relative flex-1 bg-[#2e2e2f]">
            <div className="absolute inset-y-0 right-0 left-[7px]"><div style={at(21)} className="absolute inset-y-0 right-0 bg-[#444445]" /></div>
            <div className="relative">{rows.map((r, i) => <TrackRow key={i} r={r} />)}</div>
          </div>
          <div className="pointer-events-none absolute inset-y-0 right-0 left-[7px]">
            <div style={at(21)} className="absolute top-[18px] bottom-0 -ml-[5px] flex w-[10px] flex-col items-center">
              <Svg s={10}><path d="M0 0h10v6L5 10 0 6z" fill="#3f8fe0" stroke="none" /><path d="M5 5v5" stroke="#1b3b60" strokeWidth="2" /></Svg>
              <span className="w-[2px] flex-1 bg-[#3f78bd]" />
            </div>
            <div style={at(2)} className="absolute top-[72px]">
              <Svg w={12} h={16}><path d="M1 1v12l2.800-2.500L5.800 15l2-.9L6 9.800h4z" fill="#0a0a0a" stroke="#fff" strokeWidth="1.100" /></Svg>
            </div>
          </div>
        </div>
      </div>
    </section>
  );
}

export default function App() {
  return (
    <div className="flex min-h-screen flex-col overflow-hidden bg-[#0c0c0e] pl-[3px] font-['Noto_Sans_CJK_SC','Noto_Sans',sans-serif]">
      <div className="-ml-px flex h-4 items-center bg-[#d5d3d4]">
        <div className="flex gap-[6px] pl-[5px]">
          <button aria-label="Close" className="size-2 rounded-full bg-[#e0443e]" />
          <button aria-label="Minimize" className="size-2 rounded-full bg-[#f2b33a]" />
          <button aria-label="Zoom window" className="size-2 rounded-full bg-[#2fcb45]" />
        </div>
        <h1 className="flex-1 pr-4 text-center font-['Inter',sans-serif] text-[10px] leading-[15px] text-[#444]">Adobe After Effects 2020 - Untitled Project *</h1>
      </div>
      <Toolbar />
      <main className="flex">
        <ProjectPanel />
        <div className="w-[3px] shrink-0" />
        <CompositionPanel />
        <div className="w-1 shrink-0" />
        <SidePanel />
      </main>
      <Timeline />
    </div>
  );
}
